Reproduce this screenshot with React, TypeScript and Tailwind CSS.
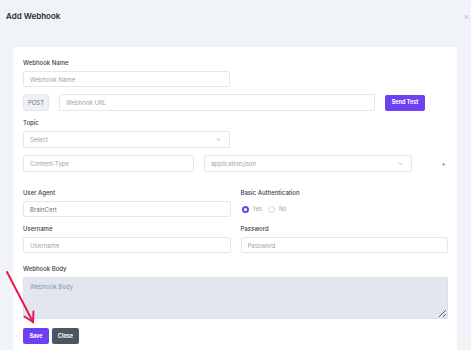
const labelCls = "block h-[8px] leading-[8px] text-[6px] font-medium text-[#374151] mb-[4px]";
const inputCls =
  "block w-full h-[16px] rounded-[2px] border border-[#e5e7eb] bg-white px-[6px] text-[6px] text-[#6b7280] placeholder:text-[#9ca3af] outline-none";

function Chevron() {
  return (
    <svg width="5" height="3" viewBox="0 0 10 6" className="text-[#9ca3af]">
      <path d="M1 1l4 4 4-4" fill="none" stroke="currentColor" strokeWidth="1.4" />
    </svg>
  );
}

function FakeSelect({ value, className }: { value: string; className: string }) {
  return (
    <div
      className={`flex items-center justify-between h-[17px] rounded-[2px] border border-[#e5e7eb] bg-white pl-[6px] pr-[8px] text-[6px] text-[#9ca3af] ${className}`}
    >
      <span>{value}</span>
      <Chevron />
    </div>
  );
}

export default function App() {
  return (
    <div className="relative flex w-[474px] h-[350px] overflow-hidden bg-white font-['Inter','Liberation_Sans',sans-serif]">
      <div className="w-[471px] h-full bg-[#f0f3f8] flex flex-col">
        <div className="shrink-0 flex items-center justify-between h-[31px] pl-[6px] pr-[2px] pt-[1px]">
          <h2 className="text-[8px] font-semibold text-[#1f2937]">Add Webhook</h2>
          <span className="text-[8px] leading-none text-[#b6bcc6]">×</span>
        </div>
        <div className="flex-1 min-h-0 pt-[16px] pl-[13px] pr-[14px]">
          <div className="h-full bg-white rounded-t-[3px] pt-[12px] pl-[10px] pr-[9px]">
            <label className={labelCls}>Webhook Name</label>
            <div className="w-[207px]">
              <input className={inputCls} placeholder="Webhook Name" />
            </div>

            <div className="flex items-center mt-[7px] pr-[23px]">
              <div className="flex items-center justify-center w-[26px] h-[17px] rounded-[2px] border border-[#e5e7eb] bg-[#eef1f6] text-[6px] text-[#6b7280]">
                POST
              </div>
              <input
                className="flex-1 min-w-0 ml-[10px] h-[17px] rounded-[2px] border border-[#e5e7eb] bg-white px-[6px] text-[6px] placeholder:text-[#9ca3af] outline-none"
                placeholder="Webhook URL"
              />
              <button className="ml-[10px] w-[40px] h-[16px] rounded-[2px] bg-[#6d40f2] text-[5.5px] font-bold text-white">
                Send Test
              </button>
            </div>

            <label className={`${labelCls} mt-[8px]`}>Topic</label>
            <FakeSelect value="Select" className="w-[207px]" />

            <div className="flex items-center mt-[7px]">
              <input
                className="w-[171px] h-[17px] rounded-[2px] border border-[#e5e7eb] bg-white px-[6px] text-[6px] placeholder:text-[#9ca3af] outline-none"
                placeholder="Content-Type"
              />
              <FakeSelect value="application/json" className="w-[208px] ml-[10px]" />
              <span className="ml-auto mr-[2px] text-[7px] leading-none text-[#6b7280]">+</span>
            </div>

            <div className="grid grid-cols-2 gap-x-[10px] mt-[17px]">
              <div>
                <label className={labelCls}>User Agent</label>
                <input className={inputCls} defaultValue="BrainCert" />
              </div>
              <div>
                <label className={labelCls}>Basic Authentication</label>
                <div className="flex items-center h-[16px] pl-[1px] text-[5.5px] text-[#9ca3af]">
                  <span className="w-[7px] h-[7px] rounded-full border-[2px] border-[#6d40f2] bg-white" />
                  <span className="ml-[4px]">Yes</span>
                  <span className="ml-[6px] w-[7px] h-[7px] rounded-full border border-[#d1d5db] bg-white" />
                  <span className="ml-[4px]">No</span>
                </div>
              </div>
              <div className="mt-[8px]">
                <label className={labelCls}>Username</label>
                <input className={inputCls} placeholder="Username" />
              </div>
              <div className="mt-[8px]">
                <label className={labelCls}>Password</label>
                <input className={inputCls} placeholder="Password" />
              </div>
            </div>

            <label className={`${labelCls} mt-[12px]`}>Webhook Body</label>
            <textarea
              className="block w-full h-[42px] rounded-[2px] border border-[#dbe1ea] bg-[#e2e7ef] px-[6px] py-[4px] text-[6px] placeholder:text-[#8a93a3] outline-none"
              placeholder="Webhook Body"
            />

            <div className="flex gap-[3px] mt-[9px]">
              <button className="w-[26px] h-[16px] rounded-[2px] bg-[#6d40f2] text-[5.5px] font-bold text-white">
                Save
              </button>
              <button className="w-[27px] h-[16px] rounded-[2px] bg-[#4b5563] text-[5.5px] font-bold text-white">
                Close
              </button>
            </div>
          </div>
        </div>
      </div>

      <svg className="absolute left-0 top-0 pointer-events-none" width="474" height="350">
        <g stroke="#e8194f" strokeWidth="2" strokeLinecap="round" fill="none">
          <path d="M7 272L33 322" />
          <path d="M33.5 311.5L33 322L24.5 316.5" />
        </g>
      </svg>
    </div>
  );
}
